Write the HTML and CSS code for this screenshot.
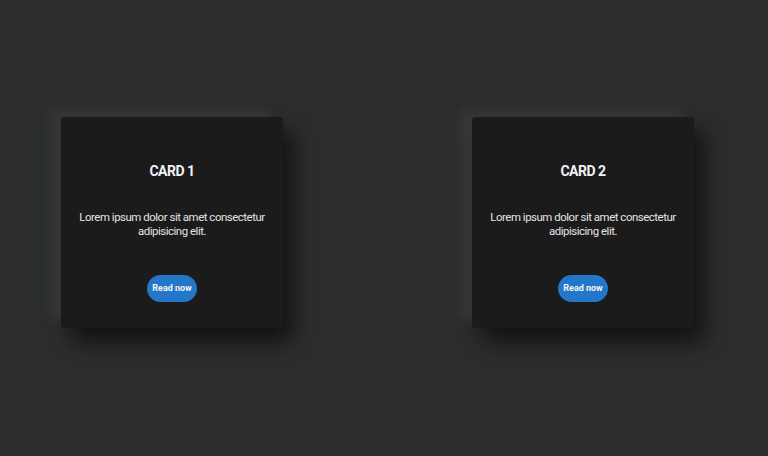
FILE: index.html
```html
<!DOCTYPE html>
<html lang="en">
<head>
    <meta charset="UTF-8">
    <meta name="viewport" content="width=device-width, initial-scale=1.0">
    <title>Cards</title>
    <link rel="stylesheet" href="styles.css">
</head>
<body>

    <!-- Cards -->
    <div class="cards">
        <div class="card">
            <h2>CARD 1</h2>
            <p>Lorem ipsum dolor sit amet consectetur adipisicing elit.</p>
            <a href="#" class="btn">Read now</a>
        </div>
        <div class="card">
            <h2>CARD 2</h2>
            <p>Lorem ipsum dolor sit amet consectetur adipisicing elit.</p>
            <a href="#" class="btn">Read now</a>
        </div>
    </div>

</body>
</html>
```

FILE: styles.css
```css
/* Page */
body {
    margin: 0;
    height: 456px;
    background-color: #2b2e2b;
    font-family: Roboto, "Liberation Sans", sans-serif;
}

/* Cards row */
.cards {
    display: flex;
    gap: 189px;
    padding: 117px 0 0 61px;
}

    .cards .card {
        width: 222px;
        height: 211px;
        box-sizing: border-box;
        padding: 44px 10px 0;
        background-color: #1b1b1b;
        border-radius: 3px;
        text-align: center;
        box-shadow: -12px -8px 12px rgba(66, 68, 66, 0.45), 10px 14px 22px rgba(0, 0, 0, 0.6);
    }

        .card h2 {
            margin: 0;
            font-size: 14px;
            font-weight: bold;
            letter-spacing: -0.5px;
            line-height: 20px;
            color: #f2f2f2;
        }

        .card p {
            margin: 29px 0 0;
            font-size: 11.4px;
            letter-spacing: -0.45px;
            line-height: 14px;
            color: #e4e4e4;
        }

/* Button */
.btn {
    display: inline-block;
    margin-top: 37px;
    width: 50px;
    height: 27px;
    line-height: 27px;
    border-radius: 14px;
    background-color: #2477c8;
    color: #f4f4f4;
    font-size: 9px;
    font-weight: bold;
    text-decoration: none;
}
```
